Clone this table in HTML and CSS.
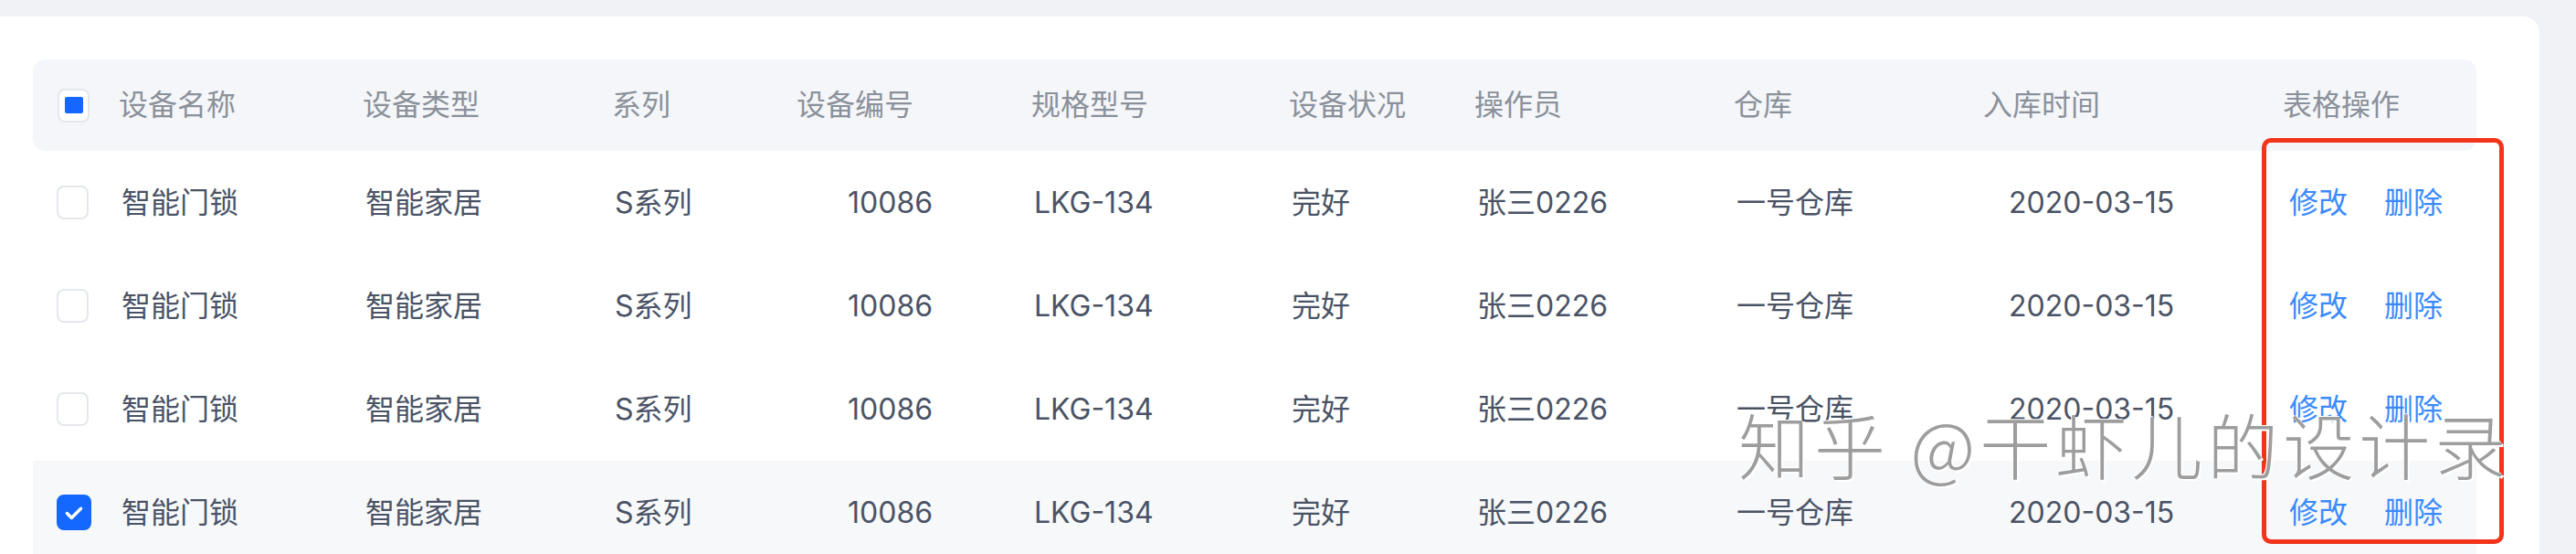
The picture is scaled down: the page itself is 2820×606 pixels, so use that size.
FILE: index.html
```html
<!DOCTYPE html>
<html lang="zh-CN">
<head>
<meta charset="utf-8">
<title>设备列表</title>
<link rel="stylesheet" href="styles.css">
</head>
<body>
<div class="page">
  <div class="card">
    <div class="table">
      <div class="row head">
        <div class="cell cb"><span class="check indeterminate"></span></div>
        <div class="cell">设备名称</div>
        <div class="cell">设备类型</div>
        <div class="cell">系列</div>
        <div class="cell">设备编号</div>
        <div class="cell">规格型号</div>
        <div class="cell">设备状况</div>
        <div class="cell">操作员</div>
        <div class="cell">仓库</div>
        <div class="cell">入库时间</div>
        <div class="cell">表格操作</div>
      </div>
      <div class="row body">
        <div class="cell cb"><span class="check"></span></div>
        <div class="cell">智能门锁</div>
        <div class="cell">智能家居</div>
        <div class="cell">S系列</div>
        <div class="cell num">10086</div>
        <div class="cell">LKG-134</div>
        <div class="cell">完好</div>
        <div class="cell">张三0226</div>
        <div class="cell">一号仓库</div>
        <div class="cell date">2020-03-15</div>
        <div class="cell ops"><a class="op">修改</a><a class="op">删除</a></div>
      </div>
      <div class="row body">
        <div class="cell cb"><span class="check"></span></div>
        <div class="cell">智能门锁</div>
        <div class="cell">智能家居</div>
        <div class="cell">S系列</div>
        <div class="cell num">10086</div>
        <div class="cell">LKG-134</div>
        <div class="cell">完好</div>
        <div class="cell">张三0226</div>
        <div class="cell">一号仓库</div>
        <div class="cell date">2020-03-15</div>
        <div class="cell ops"><a class="op">修改</a><a class="op">删除</a></div>
      </div>
      <div class="row body">
        <div class="cell cb"><span class="check"></span></div>
        <div class="cell">智能门锁</div>
        <div class="cell">智能家居</div>
        <div class="cell">S系列</div>
        <div class="cell num">10086</div>
        <div class="cell">LKG-134</div>
        <div class="cell">完好</div>
        <div class="cell">张三0226</div>
        <div class="cell">一号仓库</div>
        <div class="cell date">2020-03-15</div>
        <div class="cell ops"><a class="op">修改</a><a class="op">删除</a></div>
      </div>
      <div class="row body selected">
        <div class="cell cb"><span class="check checked"><svg viewBox="0 0 24 24" width="28" height="28"><path d="M5.5 12.5l4.2 4.2L18.5 8" fill="none" stroke="#fff" stroke-width="3" stroke-linecap="round" stroke-linejoin="round"/></svg></span></div>
        <div class="cell">智能门锁</div>
        <div class="cell">智能家居</div>
        <div class="cell">S系列</div>
        <div class="cell num">10086</div>
        <div class="cell">LKG-134</div>
        <div class="cell">完好</div>
        <div class="cell">张三0226</div>
        <div class="cell">一号仓库</div>
        <div class="cell date">2020-03-15</div>
        <div class="cell ops"><a class="op">修改</a><a class="op">删除</a></div>
      </div>
    </div>
  </div>
  <div class="annot"></div>
  <div class="watermark">知乎 @干虾儿的设计录</div>
</div>
</body>
</html>
```

FILE: styles.css
```css
* { box-sizing: border-box; margin: 0; padding: 0; }
html, body { width: 2820px; height: 606px; overflow: hidden; }
body {
  background: #f0f2f5;
  font-family: "Inter", "Noto Sans CJK SC", sans-serif;
}
.page { position: relative; width: 2820px; height: 606px; padding-top: 18px; }
.card {
  width: 2780px;
  height: 640px;
  background: #ffffff;
  border-radius: 0 18px 0 0;
  padding: 47px 0 0 36px;
}
.table { width: 2675px; }
.row {
  display: grid;
  grid-template-columns: 94px 267px 273px 202px 257px 282px 203px 284px 273px 328px 212px;
  align-items: center;
  height: 113px;
  font-size: 32px;
  line-height: 1;
  color: #4a5366;
}
.row.head {
  height: 100px;
  background: #f4f6f9;
  border-radius: 14px;
  color: #8b919b;
}
.row.selected { background: #f7f8fa; }
.cell { white-space: nowrap; }
.row.body .cell { padding-left: 3px; }
.row.body .cell.num { padding-left: 56px; }
.row.body .cell.date { padding-left: 28px; }
.row.body .cell.ops { padding-left: 7px; }
.cb { display: flex; align-items: center; padding-left: 27px; }
.row.body .cell.cb { padding-left: 26px; }
.check {
  width: 35px;
  height: 37px;
  border: 2px solid #e4e7eb;
  border-radius: 8px;
  background: #ffffff;
  display: flex;
  align-items: center;
  justify-content: center;
}
.check.indeterminate::after {
  content: "";
  width: 20px;
  height: 18px;
  background: #1468ff;
  border-radius: 2px;
}
.check.checked {
  width: 38px;
  height: 39px;
  background: #1468ff;
  border-color: #1468ff;
}
.ops { display: flex; gap: 40px; }
.op { color: #3a8aff; text-decoration: none; }
.annot {
  position: absolute;
  left: 2476px;
  top: 151px;
  width: 265px;
  height: 444px;
  border: 5px solid #f2341b;
  border-radius: 10px;
}
.watermark {
  position: absolute;
  left: 1903px;
  top: 446px;
  font-family: "Noto Sans CJK SC", sans-serif;
  font-size: 78px;
  font-weight: 300;
  letter-spacing: 5px;
  line-height: 1;
  color: #9d9d9d;
  white-space: nowrap;
  text-shadow: 2px 2px 0 #ffffff, -1px -1px 0 #ffffff;
}
```
